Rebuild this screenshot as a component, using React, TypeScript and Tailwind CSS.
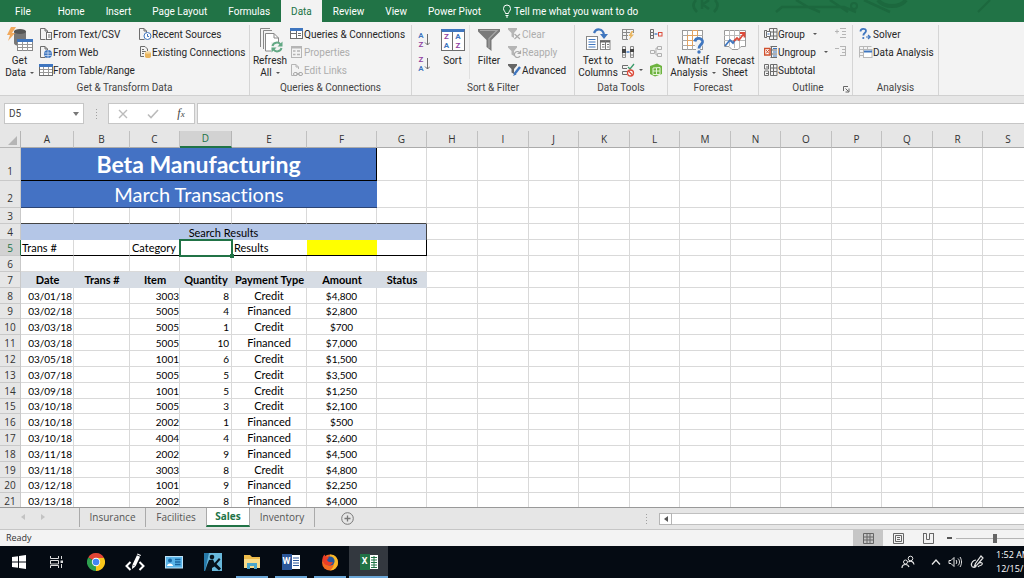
import type { ReactNode } from "react";

const ink = "#6d6d6d";
const blue = "#3f76bf";

/* ---------- small ribbon icons ---------- */

function Svg({ w = 14, h = 14, children, className = "" }: { w?: number; h?: number; children: ReactNode; className?: string }) {
  return (
    <svg width={w} height={h} viewBox={`0 0 ${w} ${h}`} fill="none" className={`shrink-0 ${className}`} aria-hidden="true">
      {children}
    </svg>
  );
}

function Page({ color = ink }: { color?: string }) {
  return <path d="M6.5 12.5H1.5V1.5H6L8.5 4V6M6 1.5V4H8.5" stroke={color} fill="none" />;
}

const TextFileIcon = () => (
  <Svg>
    <Page />
    <rect x="7.5" y="5.5" width="5" height="7" fill="#fff" stroke={ink} />
    <path d="M9 8H11.5M9 10H11.5" stroke={ink} />
  </Svg>
);

const WebIcon = () => (
  <Svg>
    <Page />
    <circle cx="9" cy="9" r="4" fill={blue} />
    <path d="M5.5 8H12.5M5.5 10.5H12.5M9 5V13" stroke="#cfe0f4" strokeWidth=".8" />
  </Svg>
);

const TableIcon = () => (
  <Svg>
    <rect x=".5" y="1.5" width="13" height="11" fill="#fff" stroke={ink} />
    <path d="M0 2.5H14" stroke={blue} strokeWidth="3" />
    <path d="M4.5 4V12M9.5 4V12M1 6.5H13M1 9.5H13" stroke="#999" />
  </Svg>
);

const RecentIcon = () => (
  <Svg>
    <Page />
    <circle cx="9.5" cy="9" r="3.5" fill="#fff" stroke={blue} />
    <path d="M9.5 7V9.5H11" stroke={blue} />
  </Svg>
);

const ConnectionsIcon = () => (
  <Svg>
    <path d="M6 11.5H2.5V1.5H7L9.5 4V6M4 4.5H6M4 6.5H8M4 8.5H6" stroke={ink} />
    <path d="M7 7.5v4c0 2 6 2 6 0v-4z" fill="#e9b55f" />
    <ellipse cx="10" cy="7.5" rx="3" ry="1.3" fill="#f7d9a0" />
  </Svg>
);

const QueriesIcon = () => (
  <Svg>
    <rect x=".5" y="1.5" width="12" height="10" fill="#fff" stroke={ink} />
    <path d="M0 2.5H13" stroke={blue} strokeWidth="3" />
    <path d="M6.5 4V11M8 6.5H11M8 8.5H11M1 6.5H6" stroke={ink} />
  </Svg>
);

const PropertiesIcon = () => (
  <Svg>
    <rect x="1.5" y="1.5" width="10" height="11" stroke="#b5b5b5" />
    <path d="M1 2.500H12" stroke="#b5b5b5" strokeWidth="2" />
    <path d="M3 6H5.500M7 6H10M3 9.500H5.500M7 9.500H10" stroke="#b5b5b5" strokeWidth="1.500" />
  </Svg>
);

const EditLinksIcon = () => (
  <Svg>
    <Page color="#b5b5b5" />
    <rect x="3.5" y="9.5" width="4" height="3" rx="1.5" fill="#f3f3f3" stroke="#aaa" />
    <rect x="8.5" y="9.5" width="4" height="3" rx="1.5" fill="#f3f3f3" stroke="#aaa" />
    <path d="M6 11H10" stroke="#aaa" />
  </Svg>
);

const FunnelClearIcon = () => (
  <Svg>
    <path d="M0 1H9V2.500L6 6V11L3.500 9.500V6L0 2.500Z" fill="#b5b5b5" />
    <path d="M6.500 7L12 12M12 7L6.500 12" stroke="#aaa" strokeWidth="1.200" />
  </Svg>
);

const FunnelReapplyIcon = () => (
  <Svg>
    <path d="M0 1H9V2.500L6 6V11L3.500 9.500V6L0 2.500Z" fill="#b5b5b5" />
    <path d="M12 8a3 3 0 1 0 0 3M12.500 5.500V8.500H9.500" stroke="#aaa" strokeWidth="1.200" />
  </Svg>
);

const FunnelAdvancedIcon = () => (
  <Svg>
    <path d="M0 1H9V2.500L6 6V11L3.500 9.500V6L0 2.500Z" fill="#666" />
    <path d="M12 4L6.500 11" stroke={blue} strokeWidth="2.400" />
    <path d="M6.800 9.500L5 13L8.500 11.500Z" fill={blue} />
  </Svg>
);

function LetterSort({ top, bottom, topClass, bottomClass }: { top: string; bottom: string; topClass: string; bottomClass: string }) {
  return (
    <span className="flex items-center">
      <span className="flex flex-col text-[8px] font-semibold leading-[9px]">
        <span className={topClass}>{top}</span>
        <span className={bottomClass}>{bottom}</span>
      </span>
      <Svg w={6} h={14}>
        <path d="M3.5 1V12M1 9.500L3.500 12L6 9.500" stroke={ink} />
      </Svg>
    </span>
  );
}

const FlashFillIcon = () => (
  <Svg>
    <path d="M1.500 2.500H12.500V6M1.500 2V12.500H7M1.500 5.500H9M1.500 8.500H7M5.500 2.500V12" stroke="#8a8a8a" />
    <path d="M10.500 4L7.500 9H9.500L8 13L13 7.500H10.500L12.500 4Z" fill="#e9b55f" />
  </Svg>
);

const DuplicatesIcon = () => (
  <Svg>
    <path d="M1.500 1.500H4.500V12.500H1.500ZM9.500 1.500H12.500V12.500H9.500ZM1.500 10H4.500M9.500 10H12.500" stroke="#8a8a8a" />
    <path d="M1 4H5V8H1ZM9 4H13V7H9Z" fill="#444" />
    <path d="M5.500 7H8.500" stroke={blue} strokeWidth="1.500" />
  </Svg>
);

const ValidationIcon = () => (
  <Svg>
    <path d="M7 2.500H1.500V5.500H6M6 8.500H1.500V11.500H6" stroke={ink} />
    <path d="M7 4L9 6L13 1" stroke="#3a9b6a" strokeWidth="1.300" />
    <circle cx="9.500" cy="10" r="3" fill="#fff" stroke="#dc4b3b" strokeWidth="1.300" />
    <path d="M7.500 8L11.500 12" stroke="#dc4b3b" strokeWidth="1.200" />
  </Svg>
);

const ConsolidateIcon = () => (
  <Svg>
    <path d="M1.500 2.500H4.500V5.500H1.500ZM1.500 5.500H4.500V8.500H1.500ZM1.500 8.500H4.500V11.500H1.500Z" stroke={ink} />
    <path d="M5.500 7H8.500" stroke={blue} strokeWidth="1.300" />
    <rect x="9.500" y="5.500" width="3.500" height="3.500" stroke="#dc4b3b" />
  </Svg>
);

const RelationshipsIcon = () => (
  <Svg>
    <path d="M1.500 5.500H5.500V8.500H1.500ZM8.500 1.500H12.500V4.500H8.500ZM8.500 8.500H12.500V11.500H8.500ZM5.500 7H7V3H8.500M7 7V10H8.500" stroke="#b0b0b0" />
  </Svg>
);

const DataModelIcon = () => (
  <Svg>
    <path d="M1 3L8 0.500L13 3V11L6 13.500L1 11Z" fill="#6db33f" />
    <path d="M4 5L11 4.500V11.500H4ZM4 8H11M7.500 5V12" stroke="#e5f5d9" />
  </Svg>
);

const GroupIcon = () => (
  <Svg>
    <path d="M3 3.500H.500V10.500H3M5.500 1.500H13V12.500H5.500ZM5.500 5H13M5.500 9H13M9.500 1.500V12.500" stroke={ink} />
    <path d="M2.500 4.500H6.500V9.500H2.500Z" fill="#fff" stroke={ink} />
    <path d="M3.500 7H5.500" stroke={blue} />
  </Svg>
);

const UngroupIcon = () => (
  <Svg>
    <path d="M6.500 1.500H13M6.500 12.500H13M6.500 5H13M6.500 9H13M7.500 1.500V12.500" stroke={ink} />
    <path d="M9 3.500H13M9 7H13M9 11H13" stroke={blue} />
    <path d="M.500 3.500H6V10H.500Z" fill="#fff" stroke="#d0502d" strokeWidth="1.500" />
    <path d="M2 8.500L5 5M2 5L5 8.500" stroke="#d0502d" />
  </Svg>
);

const SubtotalIcon = () => (
  <Svg>
    <path d="M.500 1.500H4.500V6H.500ZM.500 8H4.500V12.500H.500ZM6.500 1.500H13V12.500H6.500ZM6.500 5H13M6.500 8.500H13M9.500 1.500V12.500M2 4H4M2 10.500H4" stroke={ink} />
  </Svg>
);

const ShowDetailIcon = () => (
  <Svg>
    <path d="M1 4.500H5M3 2.500V6.500M6 1.500H12M8 4.500H12M8 7.500H12M6 10.500H12" stroke="#b5b5b5" />
  </Svg>
);

const HideDetailIcon = () => (
  <Svg>
    <path d="M1 3.500H5M6 1.500H12M8 4.500H12M8 7.500H12M6 10.500H12M11.500 1V11" stroke="#b5b5b5" />
  </Svg>
);

const SolverIcon = () => (
  <Svg>
    <path d="M1.500 4.500C1.500 1 7 1 7 4C7 6 4.300 6 4.300 8.500" stroke={blue} strokeWidth="1.800" />
    <circle cx="4.300" cy="11" r="1.100" fill={blue} />
    <path d="M7 10H11M9 8L11.200 10L9 12" stroke={blue} strokeWidth="1.200" />
  </Svg>
);

const AnalysisIcon = () => (
  <Svg>
    <path d="M.500 1.500H12.500M.500 4.500H12.500M.500 7.500H5M.500 10.500H5M.500 1.500V12.500M4.500 1.500V12.500M8.500 1.500V4" stroke="#b8b8b8" />
    <rect x="4.500" y="4.500" width="8.500" height="8" fill="#fff" stroke="#b8b8b8" />
    <path d="M5 6.500H13" stroke={blue} strokeWidth="2" />
  </Svg>
);

/* ---------- large ribbon icons ---------- */

const GetDataIcon = () => (
  <Svg w={26} h={28}>
    <path d="M7 5v12c0 4 12 4 12 0V5z" fill="#777" />
    <ellipse cx="13" cy="5.500" rx="6" ry="2.500" fill="#555" />
    <path d="M4 1L0 9H3L1 15L8 7H5L9 1Z" fill="#f0a85c" />
    <rect x="10.500" y="13.500" width="15" height="11" fill="#fff" stroke="#888" />
    <path d="M10 14.500H26" stroke={blue} strokeWidth="3" />
    <path d="M15.500 16V25M20.500 16V25M11 18.500H25M11 21.500H25" stroke="#999" />
  </Svg>
);

const RefreshIcon = () => (
  <Svg w={26} h={28}>
    <path d="M3.500 21V2.500H13M6.500 23V4.500H15" stroke="#888" />
    <path d="M8.500 25V7.500H17L21.500 12V25Z" fill="#fff" stroke="#888" />
    <path d="M17 7.500V12H21.500" stroke="#888" />
    <path d="M14 16H26V27H14Z" fill="#f3f3f3" />
    <path d="M15.500 20a4.500 4.500 0 0 1 8-1.500M24.500 22a4.500 4.500 0 0 1-8 1.500" stroke="#62a884" strokeWidth="2" />
    <path d="M25.500 15.500V20.500H20.500ZM14.500 26.500V21.500H19.500Z" fill="#62a884" />
  </Svg>
);

function SortIcon() {
  return (
    <span className="grid w-6 grid-cols-2 border border-t-[3px] border-[#6d6d6d] border-t-[#3f76bf] bg-white text-center text-[8px] font-bold leading-[9px]">
      <span className="border-r border-[#6d6d6d] text-[#9040a0]">Z</span>
      <span className="text-[#3f76bf]">A</span>
      <span className="border-r border-[#6d6d6d] text-[#3f76bf]">A</span>
      <span className="text-[#9040a0]">Z</span>
    </span>
  );
}

const FilterIcon = () => (
  <Svg w={22} h={28}>
    <path d="M0 3H22V5.500L13.500 14V25L8.500 21V14L0 5.500Z" fill="#7a7a7a" />
    <path d="M2 4.500H19L11 12.500V22" stroke="#a5a5a5" strokeWidth="1.200" />
  </Svg>
);

const TextColumnsIcon = () => (
  <Svg w={26} h={28}>
    <path d="M9 7C11 2 18 2 19 9" stroke={blue} strokeWidth="2.200" />
    <path d="M15 8H23L19 13Z" fill={blue} />
    <rect x="1.500" y="10.500" width="11" height="13" fill="#fff" stroke="#888" />
    <path d="M3.500 13.500H10.500M3.500 16H10.500M3.500 18.500H10.500M3.500 21H10.500" stroke={blue} />
    <rect x="15.500" y="14.500" width="9.500" height="9" fill="#fff" stroke="#888" />
    <path d="M15 15.500H25" stroke="#666" strokeWidth="2" />
    <path d="M20.500 15V23M17 18.500H19.500M22 18.500H24M17 21H19.500M22 21H24" stroke="#777" />
  </Svg>
);

const WhatIfIcon = () => (
  <Svg w={24} h={28}>
    <rect x="1.500" y="4.500" width="20" height="19" fill="#fff" stroke="#999" />
    <path d="M6.500 4V24M11.500 4V24M16.500 4V24M1 9.500H22M1 14.500H22M1 19.500H22" stroke="#aaa" />
    <path d="M6.500 9.500h5v5h-5zM6.500 14.500h5v5h-5zM11.500 4.500h5v5h-5z" stroke="#e2a260" />
    <path d="M14 14H21.500V20L19 23.500V28H15V21H14Z" fill="#f3f3f3" />
    <path d="M14 15.500C14.500 11 22 11.500 21.500 16C21 19 18 19 18 22.500" stroke={blue} strokeWidth="2.800" />
    <circle cx="18" cy="26" r="1.700" fill={blue} />
  </Svg>
);

const ForecastIcon = () => (
  <Svg w={24} h={28}>
    <path d="M1.500 4.500H22.500V20.500H18L15 23.500H9L6 20.500H1.500Z" fill="#fff" stroke="#999" />
    <path d="M6.500 4V20M11.500 4V22M16.500 4V22M1 9.500H22M1 14.500H22" stroke="#bbb" />
    <path d="M2 20L7 14L10 17L12 14" stroke={blue} strokeWidth="1.800" />
    <path d="M11 15L14 12L16 14L21 7.500M17 7H21.500V11.500" stroke="#dc4b3b" strokeWidth="1.800" />
  </Svg>
);

/* ---------- ribbon building blocks ---------- */

function Caret() {
  return <span className="ml-1 inline-block border-x-2 border-t-2 border-x-transparent border-t-[#555] align-middle" />;
}

function BigButton({ icon, lines, caret, className = "" }: { icon: ReactNode; lines: string[]; caret?: boolean; className?: string }) {
  return (
    <button type="button" className={`flex shrink-0 flex-col items-center ${className}`}>
      <span className="flex h-[30px] items-center justify-center">{icon}</span>
      {lines.map((line, i) => (
        <span key={line} className="whitespace-nowrap leading-3">
          {line}
          {caret && i === lines.length - 1 && <Caret />}
        </span>
      ))}
    </button>
  );
}

function SmallButton({ icon, label, caret, disabled }: { icon: ReactNode; label: string; caret?: boolean; disabled?: boolean }) {
  return (
    <button type="button" disabled={disabled} className="flex h-[18px] items-center whitespace-nowrap disabled:text-[#adadad]">
      {icon}
      {label}
      {caret && <span className="ml-1 flex"><Caret /></span>}
    </button>
  );
}

function IconButton({ label, children }: { label: string; children: ReactNode }) {
  return (
    <button type="button" aria-label={label} className="flex h-[18px] items-center">
      {children}
    </button>
  );
}

function Group({ label, className, children, launcher }: { label: string; className: string; children: ReactNode; launcher?: boolean }) {
  return (
    <section aria-label={label} className={`flex shrink-0 flex-col border-r border-[#d5d5d5] ${className}`}>
      <div className="flex flex-1">{children}</div>
      <div className="relative pt-0.5 text-center leading-[14px] text-[#444]">
        {label}
        {launcher && (
          <button type="button" aria-label={`${label} settings`} className="absolute bottom-0 right-0.5">
            <Svg w={8} h={10}>
              <path d="M1.500 6V1.500H6M3.500 3.500L6.500 6.500M7 3.500V7H3.500" stroke="#666" />
            </Svg>
          </button>
        )}
      </div>
    </section>
  );
}

const ribbonTabs = ["Home", "Insert", "Page Layout", "Formulas", "Data", "Review", "View", "Power Pivot"];

function TabBar() {
  return (
    <nav className="relative flex h-[22px] shrink-0 items-stretch gap-px overflow-hidden bg-[#217346] text-[10px] text-white">
      <svg className="absolute right-0 top-0" width="340" height="22" viewBox="0 0 340 22" fill="none" stroke="#1c683e" strokeWidth="2.500" aria-hidden="true">
        <path d="M12 0C8 4 9 8 13 12M31 0C35 4 34 8 30 12M18 0V9M18 5L25 0M18 4L25 9" />
        <path d="M92 12L98 7H160L172 12M146 0L164 12M112 0L124 7L136 12M180 0L206 12" />
        <path d="M194 0C200 8 216 8 222 0" strokeWidth="4" />
        <circle cx="170" cy="6" r="3" strokeWidth="2" />
        <path d="M294 12L306 0" strokeWidth="2" />
      </svg>
      <button type="button" className="pl-[15px] pr-4">File</button>
      {ribbonTabs.map((tab) => (
        <button
          key={tab}
          type="button"
          className={`whitespace-nowrap px-2.5 ${tab === "Data" ? "bg-[#f3f3f3] text-[#217346]" : ""}`}
        >
          {tab}
        </button>
      ))}
      <button type="button" className="flex items-center gap-0.5 whitespace-nowrap pl-2.5">
        <Svg w={10} h={14}>
          <path d="M3.500 9.500C3.500 7.500 1.500 7 1.500 4.500A3.500 3.500 0 0 1 8.500 4.500C8.500 7 6.500 7.500 6.500 9.500ZM3.500 11.500H6.500M4 13H6" stroke="#fff" />
        </Svg>
        Tell me what you want to do
      </button>
    </nav>
  );
}

function Ribbon() {
  return (
    <div className="flex shrink-0 overflow-hidden border-b border-[#d0d0d0] bg-[#f3f3f3] pt-[3px] text-[10px] text-[#262626]">
      <Group label="Get & Transform Data" className="w-[250px]">
        <BigButton icon={<GetDataIcon />} lines={["Get", "Data"]} caret className="w-[39px]" />
        <div className="w-[99px]">
          <SmallButton icon={<TextFileIcon />} label="From Text/CSV" />
          <SmallButton icon={<WebIcon />} label="From Web" />
          <SmallButton icon={<TableIcon />} label="From Table/Range" />
        </div>
        <div>
          <SmallButton icon={<RecentIcon />} label="Recent Sources" />
          <SmallButton icon={<ConnectionsIcon />} label="Existing Connections" />
        </div>
      </Group>
      <Group label="Queries & Connections" className="w-[162px]">
        <BigButton icon={<RefreshIcon />} lines={["Refresh", "All"]} caret className="w-10" />
        <div>
          <SmallButton icon={<QueriesIcon />} label="Queries & Connections" />
          <SmallButton icon={<PropertiesIcon />} label="Properties" disabled />
          <SmallButton icon={<EditLinksIcon />} label="Edit Links" disabled />
        </div>
      </Group>
      <Group label="Sort & Filter" className="w-[163px]">
        <div className="flex w-6 flex-col items-center justify-between pb-1.5 pt-1.5">
          <button type="button" aria-label="Sort A to Z">
            <LetterSort top="A" bottom="Z" topClass="text-[#3f76bf]" bottomClass="text-[#9040a0]" />
          </button>
          <button type="button" aria-label="Sort Z to A">
            <LetterSort top="Z" bottom="A" topClass="text-[#9040a0]" bottomClass="text-[#3f76bf]" />
          </button>
        </div>
        <BigButton icon={<SortIcon />} lines={["Sort"]} className="w-[34px] border-r border-[#e0e0e0]" />
        <BigButton icon={<FilterIcon />} lines={["Filter"]} className="w-[38px]" />
        <div>
          <SmallButton icon={<FunnelClearIcon />} label="Clear" disabled />
          <SmallButton icon={<FunnelReapplyIcon />} label="Reapply" disabled />
          <SmallButton icon={<FunnelAdvancedIcon />} label="Advanced" />
        </div>
      </Group>
      <Group label="Data Tools" className="w-[93px]">
        <BigButton icon={<TextColumnsIcon />} lines={["Text to", "Columns"]} className="w-[46px]" />
        <div className="w-7">
          <IconButton label="Flash Fill"><FlashFillIcon /></IconButton>
          <IconButton label="Remove Duplicates"><DuplicatesIcon /></IconButton>
          <IconButton label="Data Validation"><ValidationIcon /><Caret /></IconButton>
        </div>
        <div>
          <IconButton label="Consolidate"><ConsolidateIcon /></IconButton>
          <IconButton label="Relationships"><RelationshipsIcon /></IconButton>
          <IconButton label="Manage Data Model"><DataModelIcon /></IconButton>
        </div>
      </Group>
      <Group label="Forecast" className="w-[91px]">
        <BigButton icon={<WhatIfIcon />} lines={["What-If", "Analysis"]} caret className="w-[50px]" />
        <BigButton icon={<ForecastIcon />} lines={["Forecast", "Sheet"]} className="w-[34px]" />
      </Group>
      <Group label="Outline" className="w-[94px] pl-[5px]" launcher>
        <div className="w-[70px]">
          <SmallButton icon={<GroupIcon />} label="Group" caret />
          <SmallButton icon={<UngroupIcon />} label="Ungroup" caret />
          <SmallButton icon={<SubtotalIcon />} label="Subtotal" />
        </div>
        <div>
          <IconButton label="Show Detail"><ShowDetailIcon /></IconButton>
          <IconButton label="Hide Detail"><HideDetailIcon /></IconButton>
        </div>
      </Group>
      <Group label="Analysis" className="w-[86px]">
        <div className="pl-1.5">
          <SmallButton icon={<SolverIcon />} label="Solver" />
          <SmallButton icon={<AnalysisIcon />} label="Data Analysis" />
        </div>
      </Group>
    </div>
  );
}

function FormulaBar() {
  return (
    <div className="flex shrink-0 items-center bg-[#e6e6e6] pb-[7px] pl-1 pt-[7px] text-[10px] text-[#444]">
      <div className="flex h-[21px] w-20 items-center border border-[#c6c6c6] bg-white pr-1">
        <input aria-label="Name box" defaultValue="D5" className="min-w-0 flex-1 bg-transparent pl-1 outline-none" />
        <span className="border-x-[3px] border-t-4 border-x-transparent border-t-[#777]" />
      </div>
      <div className="flex w-6 justify-center">
        <Svg w={3} h={12}>
          <path d="M1.500 1V12" stroke="#a0a0a0" strokeDasharray="1 2" />
        </Svg>
      </div>
      <div className="flex h-[21px] w-[87px] items-center justify-around border border-[#c6c6c6] bg-white">
        <button type="button" aria-label="Cancel">
          <Svg w={10} h={10}><path d="M1 1L9 9M9 1L1 9" stroke="#bbb" strokeWidth="1.400" /></Svg>
        </button>
        <button type="button" aria-label="Enter">
          <Svg w={12} h={10}><path d="M1 5.500L4 8.500L11 1" stroke="#bbb" strokeWidth="1.600" /></Svg>
        </button>
        <button type="button" aria-label="Insert function" className="font-['Liberation_Serif',serif] text-xs italic leading-3">
          f<span className="text-[9px]">x</span>
        </button>
      </div>
      <input aria-label="Formula" className="ml-0.5 h-[21px] min-w-0 flex-1 border border-r-0 border-[#c6c6c6] bg-white px-1 outline-none" />
    </div>
  );
}

/* ---------- worksheet ---------- */

const columns = [
  { name: "A", width: 53 }, { name: "B", width: 56 }, { name: "C", width: 50 },
  { name: "D", width: 52 }, { name: "E", width: 75 }, { name: "F", width: 70 },
  { name: "G", width: 50 }, { name: "H", width: 51 }, { name: "I", width: 51 },
  { name: "J", width: 50 }, { name: "K", width: 51 }, { name: "L", width: 50 },
  { name: "M", width: 51 }, { name: "N", width: 50 }, { name: "O", width: 51 },
  { name: "P", width: 50 }, { name: "Q", width: 51 }, { name: "R", width: 50 },
  { name: "S", width: 51 },
];

const transactions = [
  { date: "03/01/18", item: 3003, quantity: 8, payment: "Credit", amount: "$4,800", height: 16 },
  { date: "03/02/18", item: 5005, quantity: 4, payment: "Financed", amount: "$2,800", height: 15 },
  { date: "03/03/18", item: 5005, quantity: 1, payment: "Credit", amount: "$700", height: 16 },
  { date: "03/03/18", item: 5005, quantity: 10, payment: "Financed", amount: "$7,000", height: 16 },
  { date: "03/05/18", item: 1001, quantity: 6, payment: "Credit", amount: "$1,500", height: 16 },
  { date: "03/07/18", item: 5005, quantity: 5, payment: "Credit", amount: "$3,500", height: 16 },
  { date: "03/09/18", item: 1001, quantity: 5, payment: "Credit", amount: "$1,250", height: 16 },
  { date: "03/10/18", item: 5005, quantity: 3, payment: "Credit", amount: "$2,100", height: 15 },
  { date: "03/10/18", item: 2002, quantity: 1, payment: "Financed", amount: "$500", height: 16 },
  { date: "03/10/18", item: 4004, quantity: 4, payment: "Financed", amount: "$2,600", height: 16 },
  { date: "03/11/18", item: 2002, quantity: 9, payment: "Financed", amount: "$4,500", height: 16 },
  { date: "03/11/18", item: 3003, quantity: 8, payment: "Credit", amount: "$4,800", height: 16 },
  { date: "03/12/18", item: 1001, quantity: 9, payment: "Financed", amount: "$2,250", height: 15 },
  { date: "03/13/18", item: 2002, quantity: 8, payment: "Financed", amount: "$4,000", height: 16 },
];

const cell = "border-b border-r border-[#d9d9d9] p-0";

function RowHead({ n, active, tall }: { n: number; active?: boolean; tall?: boolean }) {
  return (
    <th
      scope="row"
      className={`border-b border-r p-0 align-bottom text-[10px] font-normal font-['Open_Sans',sans-serif] ${tall ? "leading-[18px]" : "leading-[14px]"} ${
        active ? "border-b-[#c9c9c9] border-r-[#217346] bg-[#d2d2d2] text-[#217346]" : "border-[#c9c9c9] bg-[#e6e6e6] text-[#333]"
      }`}
    >
      {n}
    </th>
  );
}

function Blank({ count }: { count: number }) {
  return <>{Array.from({ length: count }, (_, i) => <td key={i} className={cell} />)}</>;
}

function Sheet() {
  return (
    <main className="min-h-0 flex-1 overflow-hidden bg-white">
      <table className="w-[1034px] table-fixed border-separate border-spacing-0 font-['Lato',sans-serif] text-[11px] leading-[15px] text-black [font-variant-ligatures:none]">
        <colgroup>
          <col className="w-[21px]" />
          {columns.map((c) => <col key={c.name} style={{ width: c.width }} />)}
        </colgroup>
        <thead>
          <tr className="h-[17px] font-['Open_Sans',sans-serif] text-[10px]">
            <td className="border-b border-r border-[#b5b5b5] bg-[#e6e6e6] p-0 pr-0.5 align-bottom">
              <Svg w={12} h={12} className="ml-auto"><path d="M11 1V10H2Z" fill="#b5b5b5" /></Svg>
            </td>
            {columns.map((c) => (
              <th
                key={c.name}
                scope="col"
                className={`border-r p-0 font-normal ${
                  c.name === "D"
                    ? "border-b-2 border-b-[#217346] border-r-[#b5b5b5] bg-[#d2d2d2] text-[#217346]"
                    : "border-b border-b-[#ababab] border-r-[#c0c0c0] bg-[#e6e6e6] text-[#333]"
                }`}
              >
                {c.name}
              </th>
            ))}
          </tr>
        </thead>
        <tbody>
          <tr className="h-[33px]">
            <RowHead n={1} tall />
            <td colSpan={6} className="border-b border-r border-black bg-[#4472c4] p-0 text-center text-[23px] font-bold leading-8 text-white">
              Beta Manufacturing
            </td>
            <Blank count={13} />
          </tr>
          <tr className="h-[27px]">
            <RowHead n={2} tall />
            <td colSpan={6} className="border-b border-b-[#2c4474] bg-[#4472c4] p-0 text-center text-[20px] leading-[26px] text-white">
              March Transactions
            </td>
            <Blank count={13} />
          </tr>
          <tr className="h-4">
            <RowHead n={3} />
            {columns.map((c, i) => (
              <td key={c.name} className={`border-b border-r border-r-[#d9d9d9] p-0 ${i < 7 ? "border-b-[#444]" : "border-b-[#d9d9d9]"}`} />
            ))}
          </tr>
          <tr className="h-4">
            <RowHead n={4} />
            <td colSpan={7} className="border-r border-[#444] bg-[#b4c6e7] p-0 text-center">Search Results</td>
            <Blank count={12} />
          </tr>
          <tr className="h-4">
            <RowHead n={5} active />
            <td className="border-b border-r border-b-black border-r-[#d9d9d9] p-0 pl-px">Trans #</td>
            <td className="border-b border-r border-b-black border-r-[#d9d9d9] p-0" />
            <td className="border-b border-b-black p-0 pl-0.5">Category</td>
            <td className="relative border-b border-b-black p-0">
              <span className="absolute -inset-x-px -bottom-0.5 -top-px border-2 border-[#217346]" />
              <span className="absolute -bottom-[3px] -right-0.5 size-1 bg-[#217346]" />
            </td>
            <td className="border-b border-b-black p-0 pl-0.5">Results</td>
            <td className="border-b border-b-black bg-[#ffff00] p-0" />
            <td className="border-b border-r border-black p-0" />
            <Blank count={12} />
          </tr>
          <tr className="h-4">
            <RowHead n={6} />
            <Blank count={19} />
          </tr>
          <tr className="h-4">
            <RowHead n={7} />
            {["Date", "Trans #", "Item", "Quantity", "Payment Type", "Amount", "Status"].map((h) => (
              <th key={h} className="whitespace-nowrap border-b border-[#d6dce4] bg-[#d6dce4] p-0 text-center font-bold">{h}</th>
            ))}
            <Blank count={12} />
          </tr>
          {transactions.map((t, i) => (
            <tr key={i} style={{ height: t.height }} className="leading-[14px]">
              <RowHead n={i + 8} />
              <td className={`${cell} pr-px text-right text-[10px]`}>{t.date}</td>
              <td className={cell} />
              <td className={`${cell} text-right text-[10px]`}>{t.item}</td>
              <td className={`${cell} pr-0.5 text-right text-[10px]`}>{t.quantity}</td>
              <td className={`${cell} text-center`}>{t.payment}</td>
              <td className={`${cell} text-center text-[10px]`}>{t.amount}</td>
              <Blank count={13} />
            </tr>
          ))}
        </tbody>
      </table>
    </main>
  );
}

function SheetTabs() {
  return (
    <div className="flex h-[23px] shrink-0 border-y border-b-[#c6c6c6] border-t-[#999] bg-[#e6e6e6] text-[10px] text-[#555] font-['Open_Sans',sans-serif]">
      <div className="flex w-[79px] items-center gap-4 pb-1 pl-[21px]">
        <button type="button" aria-label="Previous sheets" className="border-y-[3px] border-r-4 border-y-transparent border-r-[#c3c3c3]" />
        <button type="button" aria-label="Next sheets" className="border-y-[3px] border-l-4 border-y-transparent border-l-[#c3c3c3]" />
      </div>
      <div className="mb-0.5 flex">
        <button type="button" className="w-[66px] border-l border-[#aaa]">Insurance</button>
        <button type="button" className="w-[61px] border-l border-[#aaa]">Facilities</button>
        <button type="button" className="w-11 border-x border-b-2 border-x-[#aaa] border-b-[#217346] bg-white font-bold text-[#217346]">Sales</button>
        <button type="button" className="w-[65px] border-r border-[#aaa]">Inventory</button>
      </div>
      <button type="button" aria-label="New sheet" className="ml-[26px] self-center">
        <Svg w={13} h={13}>
          <circle cx="6.500" cy="6.500" r="5.800" stroke="#777" />
          <path d="M6.500 3.500V9.500M3.500 6.500H9.500" stroke="#777" strokeWidth="1.300" />
        </Svg>
      </button>
      <div className="ml-auto flex w-[37%] items-center">
        <Svg w={3} h={12}>
          <path d="M1.500 1V12" stroke="#a0a0a0" strokeDasharray="1 2" />
        </Svg>
        <button type="button" aria-label="Scroll left" className="ml-[11px] flex h-3 w-[13px] items-center justify-center border border-[#b5b5b5] bg-white">
          <span className="border-y-[3px] border-r-4 border-y-transparent border-r-[#555]" />
        </button>
        <div className="h-3 flex-1 border-y border-[#c0c0c0] bg-white" />
      </div>
    </div>
  );
}

function StatusBar() {
  return (
    <div className="flex h-4 shrink-0 items-center overflow-hidden bg-[#f3f3f3] pl-1.5 text-[9px] text-[#333] font-['Open_Sans',sans-serif]">
      <span>Ready</span>
      <div className="ml-auto flex h-full shrink-0">
        <button type="button" aria-label="Normal view" className="flex w-[30px] items-center justify-center bg-[#c6c6c6]">
          <Svg w={11} h={11}><path d="M.500 .500H10.500V10.500H.500ZM4 .500V10.500M7 .500V10.500M.500 4H10.500M.500 7H10.500" stroke="#666" /></Svg>
        </button>
        <button type="button" aria-label="Page layout view" className="flex w-[30px] items-center justify-center">
          <Svg w={11} h={11}><path d="M.500 .500H10.500V10.500H.500ZM2.500 2.500H8.500V8.500H2.500ZM4 4.500H7M4 6.500H7" stroke="#666" /></Svg>
        </button>
        <button type="button" aria-label="Page break view" className="flex w-[30px] items-center justify-center">
          <Svg w={11} h={11}><path d="M.500 0V10.500H10.500V0M.500 .500H3.500V6.500M10.500 .500H6.500V6.500H3.500" stroke="#666" /></Svg>
        </button>
      </div>
      <button type="button" aria-label="Zoom out" className="ml-1 h-0.5 w-[5px] shrink-0 bg-[#555]" />
      <div className="ml-1 w-[68px] shrink-0 overflow-hidden">
        <input
          type="range"
          aria-label="Zoom"
          defaultValue={50}
          className="block h-3 w-[78px] appearance-none bg-[linear-gradient(#b5b5b5,#b5b5b5)] bg-[length:100%_1px] bg-center bg-no-repeat [&::-webkit-slider-thumb]:h-[9px] [&::-webkit-slider-thumb]:w-1 [&::-webkit-slider-thumb]:appearance-none [&::-webkit-slider-thumb]:bg-[#666]"
        />
      </div>
    </div>
  );
}

/* ---------- taskbar ---------- */

const WindowsIcon = () => (
  <Svg w={14} h={14}>
    <path d="M0 2L6 1.200V6.500H0ZM7 1L14 0V6.500H7ZM0 7.500H6V12.800L0 12ZM7 7.500H14V14L7 13Z" fill="#fff" />
  </Svg>
);

const TaskViewIcon = () => (
  <Svg w={14} h={14}>
    <path d="M.500 1V3.500H8.500V1M.500 13V10.500H8.500V13M.500 5.500H8.500V9H.500ZM11.500 1V4M11.500 9V13" stroke="#ddd" />
    <path d="M10.500 5.500H13V8H10.500Z" fill="#ddd" />
  </Svg>
);

const ChromeIcon = () => (
  <Svg w={18} h={18}>
    <path d="M9 9L1.200 4.500A9 9 0 0 1 16.800 4.500Z" fill="#e24536" />
    <path d="M9 9L16.800 4.500A9 9 0 0 1 9 18Z" fill="#fbc71b" />
    <path d="M9 9V18A9 9 0 0 1 1.200 4.500Z" fill="#2ea04f" />
    <path d="M9 5H16.800L12.500 11L9 18L9 13Z" fill="#fbc71b" />
    <circle cx="9" cy="9" r="4.200" fill="#fff" />
    <circle cx="9" cy="9" r="3.300" fill="#4286f4" />
  </Svg>
);

const CodeIcon = () => (
  <Svg w={20} h={18}>
    <path d="M5.500 9L1.500 13L5.500 17M14.500 9L18.500 13L14.500 17" stroke="#fff" strokeWidth="2" />
    <path d="M13.500 3L9 12.500" stroke="#fff" strokeWidth="3.500" />
    <path d="M7.300 12L7 16L10.500 13.500ZM12.500 0.500L16 2L15.500 3L12 1.500Z" fill="#fff" />
  </Svg>
);

const CardIcon = () => (
  <Svg w={18} h={14}>
    <rect x=".500" y="1.500" width="17" height="11.500" fill="#59b4e8" stroke="#bfe3f8" />
    <circle cx="5" cy="5.500" r="2" fill="#1766a5" />
    <path d="M2 11C2 7.500 8 7.500 8 11Z" fill="#fff" />
    <path d="M10 4.500H15.500M10 7H15.500M10 9.500H15.500" stroke="#17639e" strokeWidth="1.300" />
  </Svg>
);

const ReaderIcon = () => (
  <Svg w={18} h={18}>
    <rect width="18" height="18" fill="#69b9dc" />
    <path d="M0 0H5L1 18H0Z" fill="#2779a8" />
    <circle cx="8" cy="4" r="2.300" fill="#07131c" />
    <path d="M5 7L9 6.500L10.500 10L15 5L16.500 6.500L12.500 11L17 15.500L15 17.500L10.500 13.500L8 15V18H1L3 12Z" fill="#07131c" />
  </Svg>
);

const FolderIcon = () => (
  <Svg w={18} h={16}>
    <path d="M1 1H7L9 3H17V14H1Z" fill="#eebc4b" />
    <path d="M1 5H17V14H1Z" fill="#f9dc89" />
    <path d="M4 15V9H14V15H11V12H7V15Z" fill="#4ba6ca" />
  </Svg>
);

function OfficeIcon({ letter, badge, lines }: { letter: string; badge: string; lines: ReactNode }) {
  return (
    <span className="flex items-center">
      <span className={`flex h-4 w-2.5 items-center justify-center text-[9px] font-bold text-white ${badge}`}>{letter}</span>
      {lines}
    </span>
  );
}

const FirefoxIcon = () => (
  <Svg w={18} h={18}>
    <circle cx="9" cy="9.500" r="8" fill="#f26a21" />
    <path d="M9 1.500C14 1.500 17 5 17 9.500C17 14 13 17.500 9 17.500C15 13 13 7 9 6Z" fill="#f9b928" />
    <circle cx="9" cy="8" r="4.600" fill="#23569e" />
    <path d="M1.500 8C1 5 2 3 3.500 1.500C4 3.500 6 4 8 4.500L6 7C7 9 9 9.500 12 9C11 12.500 6 13.500 3.500 11Z" fill="#ea3d27" />
  </Svg>
);

function TaskButton({ label, open, active, wide = true, children }: { label: string; open?: boolean; active?: boolean; wide?: boolean; children: ReactNode }) {
  return (
    <button
      type="button"
      aria-label={label}
      className={`flex h-full shrink-0 flex-col items-center ${wide ? "w-[39px]" : "w-[38px]"} ${active ? "bg-[#33383f]" : ""}`}
    >
      <span className="flex flex-1 items-center pt-0.5">{children}</span>
      <span className={`h-0.5 ${active ? "w-full" : "w-8"} ${open ? "bg-[#6ba7d8]" : ""}`} />
    </button>
  );
}

function Taskbar() {
  return (
    <footer className="flex h-8 shrink-0 items-center overflow-hidden bg-[#050b13] text-white">
      <TaskButton label="Start" wide={false}><WindowsIcon /></TaskButton>
      <TaskButton label="Task View" wide={false}><TaskViewIcon /></TaskButton>
      <TaskButton label="Chrome"><ChromeIcon /></TaskButton>
      <TaskButton label="Code editor"><CodeIcon /></TaskButton>
      <TaskButton label="Contacts"><CardIcon /></TaskButton>
      <TaskButton label="Kindle"><ReaderIcon /></TaskButton>
      <TaskButton label="File Explorer" open><FolderIcon /></TaskButton>
      <TaskButton label="Word" open>
        <OfficeIcon
          letter="W"
          badge="bg-[#2b579a]"
          lines={<Svg w={8} h={14}><rect width="8" height="14" fill="#fff" /><path d="M1 3H7M1 5.500H7M1 8H7M1 10.500H7" stroke="#2b579a" /></Svg>}
        />
      </TaskButton>
      <TaskButton label="Firefox" open><FirefoxIcon /></TaskButton>
      <TaskButton label="Excel" open active>
        <OfficeIcon
          letter="X"
          badge="bg-[#217346]"
          lines={<Svg w={8} h={14}><rect width="8" height="14" fill="#fff" /><path d="M1 2.500H7M1 5H7M1 7.500H7M1 10H7M1 12.500H7M4 1V13" stroke="#217346" /></Svg>}
        />
      </TaskButton>
      <div className="ml-auto flex items-center">
        <button type="button" aria-label="People" className="mr-4">
          <Svg w={14} h={14}>
            <circle cx="9.500" cy="3.500" r="2.300" stroke="#e5e5e5" />
            <circle cx="4.500" cy="7" r="2" stroke="#e5e5e5" />
            <path d="M1 13C1 10 3 9.500 4.500 9.500S7.500 10.500 8 12M7.500 7C9 5.500 12.500 6 13 9.500" stroke="#e5e5e5" strokeWidth="1.200" />
          </Svg>
        </button>
        <button type="button" aria-label="Show hidden icons" className="mr-[7px]">
          <Svg w={10} h={8}><path d="M1 6.500L5 2L9 6.500" stroke="#e5e5e5" strokeWidth="1.300" /></Svg>
        </button>
        <button type="button" aria-label="Volume" className="mr-2">
          <Svg w={14} h={12}>
            <path d="M1 4.500H3L6 1.500V10.500L3 7.500H1ZM8 4C9 5 9 7 8 8M10 2.500C12 4.500 12 7.500 10 9.500M12 1C14 4 14 8 12 11" stroke="#e5e5e5" />
          </Svg>
        </button>
        <button type="button" aria-label="Pen workspace" className="mr-3">
          <Svg w={14} h={14}>
            <path d="M11 1L13 3L7 10L4.500 11L5.500 8.500ZM6 5C3 5 1 8 1.500 10.500C2 13 6 13 6 11M9 8C11 7 13 8 12 9.500C11 11 9 10 8 12" stroke="#e5e5e5" strokeWidth="1.200" />
          </Svg>
        </button>
        <div className="w-7 overflow-hidden whitespace-nowrap text-[9px] leading-[14px] font-['Open_Sans',sans-serif]">
          <div>1:52 AM</div>
          <div>12/15/18</div>
        </div>
      </div>
    </footer>
  );
}

export default function App() {
  return (
    <div className="flex h-screen flex-col overflow-hidden font-['Roboto','Open_Sans',sans-serif]">
      <TabBar />
      <Ribbon />
      <FormulaBar />
      <Sheet />
      <SheetTabs />
      <StatusBar />
      <Taskbar />
    </div>
  );
}
